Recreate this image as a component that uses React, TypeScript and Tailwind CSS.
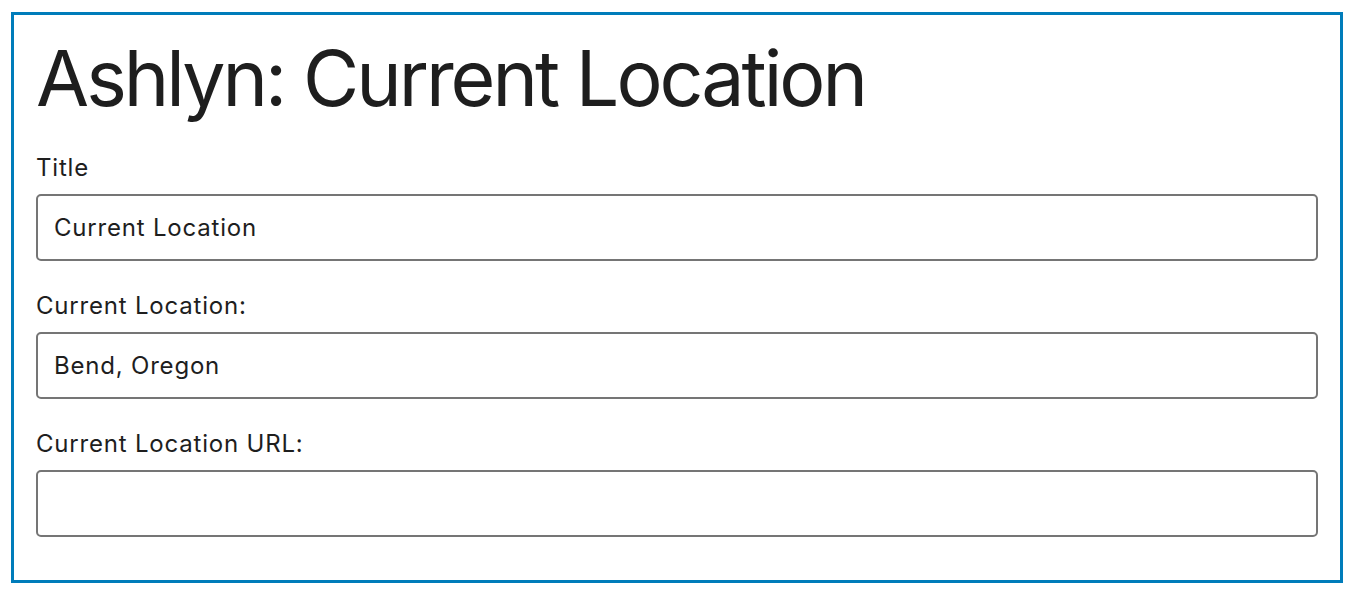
import React from "react";

const font = { fontFamily: "Inter, 'Noto Sans', sans-serif" };

function Field({ label, value }: { label: string; value: string }) {
  return (
    <div className="flex flex-col">
      <label className="text-[24px] leading-[28px] tracking-[0.8px] text-[#1e1e1e]">{label}</label>
      <div className="mt-[12px] h-[67px] w-full rounded-[5px] border-2 border-[#757575] bg-white px-[16px] flex items-center">
        <span className="text-[24px] leading-[28px] tracking-[0.8px] text-[#1e1e1e]">{value}</span>
      </div>
    </div>
  );
}

export default function App() {
  return (
    <div className="w-[1356px] h-[604px] bg-white pl-[11px] pt-[12px]" style={font}>
      <div className="h-[571px] w-[1332px] border-[3px] border-[#007cba] pl-[22px] pr-[22px] pt-[25px] flex flex-col">
        <h2 className="text-[77px] leading-[77px] font-normal text-[#1e1e1e] tracking-[-3px]">
          Ashlyn: Current Location
        </h2>
        <div className="mt-[37px] flex flex-col gap-[31px]">
          <Field label="Title" value="Current Location" />
          <Field label="Current Location:" value="Bend, Oregon" />
          <Field label="Current Location URL:" value="" />
        </div>
      </div>
    </div>
  );
}
